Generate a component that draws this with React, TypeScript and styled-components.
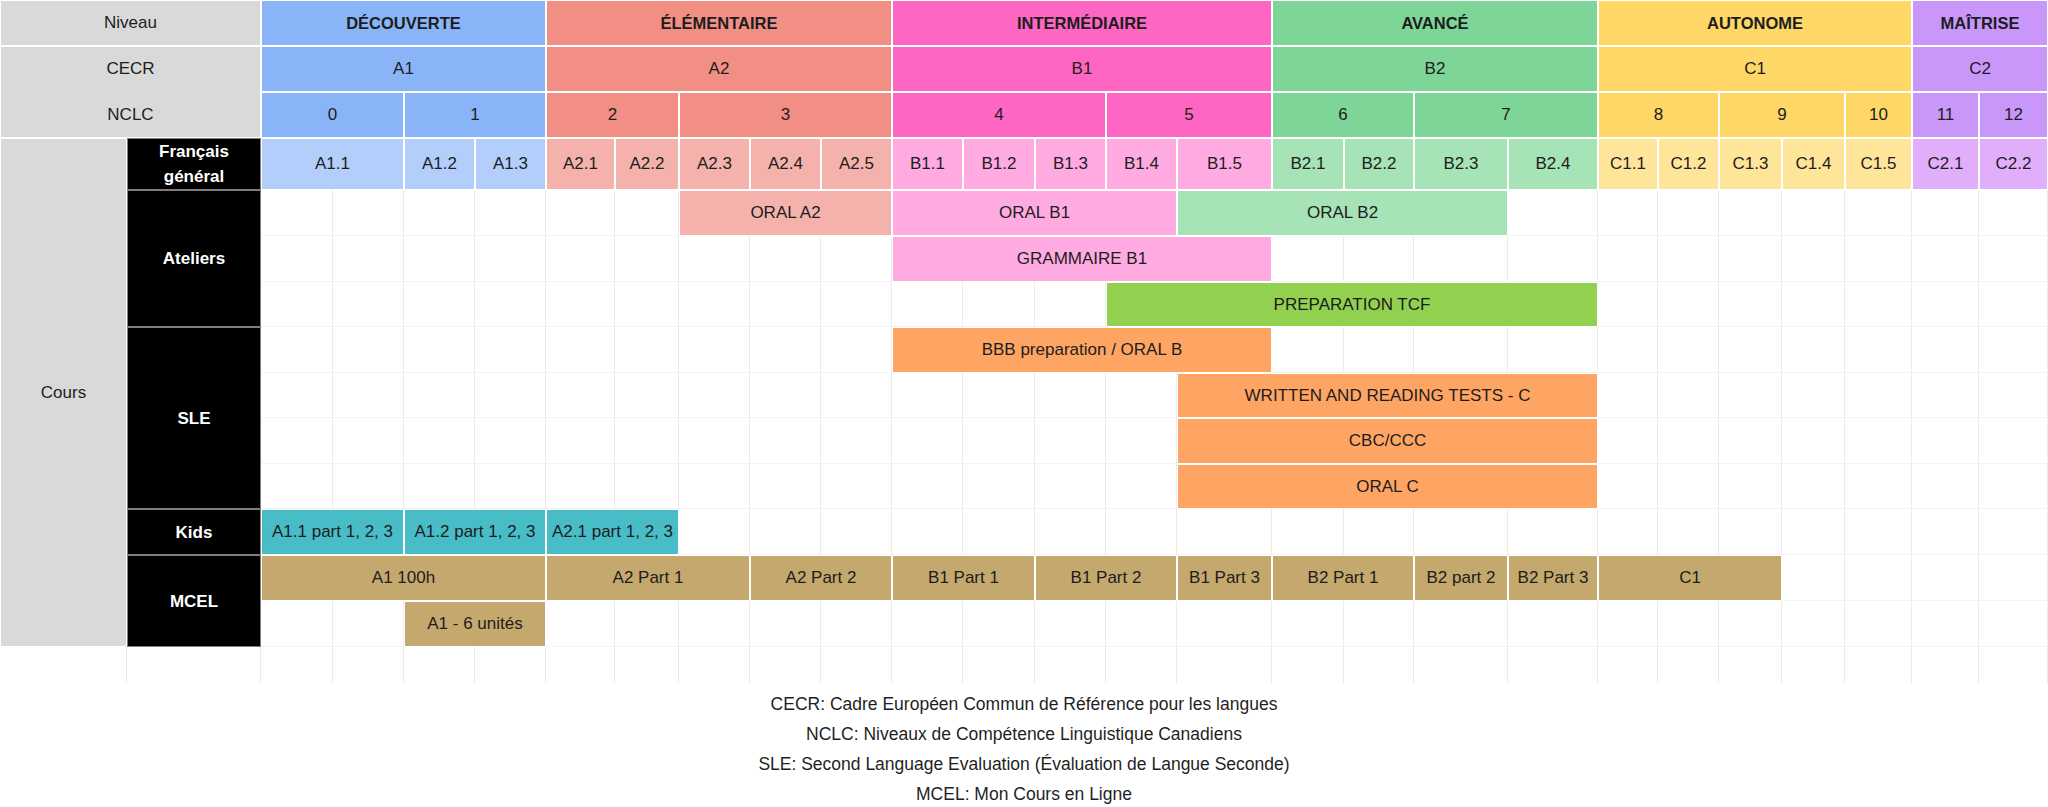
import React from 'react';
import styled, { createGlobalStyle } from 'styled-components';

const GlobalStyle = createGlobalStyle`
  html, body { margin: 0; padding: 0; background: #ffffff; }
  body {
    font-family: "Liberation Sans", Arial, sans-serif;
    color: #1d1d1d;
  }
`;

const COLS = [127, 134, 72, 71, 71, 71, 69, 64, 71, 71, 71, 71, 72, 71, 71, 95, 72, 70, 94, 90, 60, 61, 63, 63, 67, 67, 69];
const ROWS = [46, 46, 46, 52, 46, 46, 45, 46, 45, 46, 45, 46, 46, 46, 36];

const Page = styled.div`
  width: 2048px;
`;

const Chart = styled.div`
  display: grid;
  grid-template-columns: ${COLS.map((c) => `${c}px`).join(' ')};
  grid-template-rows: ${ROWS.map((r) => `${r}px`).join(' ')};
  width: 2048px;
`;

type Place = { $c: string; $r: string };

const Cell = styled.div<Place & { $bg?: string }>`
  grid-column: ${(p) => p.$c};
  grid-row: ${(p) => p.$r};
  display: flex;
  align-items: center;
  justify-content: center;
  text-align: center;
  white-space: nowrap;
  background: ${(p) => p.$bg ?? 'transparent'};
  box-shadow: inset 0 0 0 1px #ffffff;
  font-size: 17px;
  color: #1d1d1d;
`;

const GridBg = styled.div<Place & { $open?: boolean }>`
  grid-column: ${(p) => p.$c};
  grid-row: ${(p) => p.$r};
  border-right: 1px solid #ebebeb;
  border-bottom: ${(p) => (p.$open ? 'none' : '1px solid #f4f4f4')};
`;

const LevelHead = styled(Cell)`
  font-weight: 700;
  font-size: 16.5px;
`;

const RowLabel = styled(Cell)<{ $joinBelow?: boolean; $joinAbove?: boolean }>`
  background: #d9d9d9;
  box-shadow: ${(p) =>
    p.$joinBelow
      ? 'inset 1px 1px 0 #ffffff, inset -1px 0 0 #ffffff'
      : p.$joinAbove
      ? 'inset 1px 0 0 #ffffff, inset -1px -1px 0 #ffffff'
      : 'inset 0 0 0 1px #ffffff'};
`;

const GroupLabel = styled(Cell)`
  background: #000000;
  color: #ffffff;
  font-weight: 700;
  font-size: 17px;
  line-height: 25px;
  white-space: normal;
  box-shadow: inset 0 0 0 1px #7d7d7d;
`;

const Bar = styled(Cell)``;

const Footer = styled.div`
  padding-top: 6px;
  text-align: center;
  font-size: 17.5px;
  line-height: 30px;
  color: #1f1f1f;
`;

const FooterLine = styled.div``;

const PAL = {
  blue: ['#8AB4F8', '#B3CEFB'],
  salmon: ['#F28F85', '#F5B2AC'],
  pink: ['#FF66C4', '#FFAAE1'],
  green: ['#7DD697', '#A6E3B7'],
  yellow: ['#FED766', '#FEE59A'],
  purple: ['#C997FA', '#E1AEFC'],
} as const;

type Tone = keyof typeof PAL;

const LEVELS: { name: string; cecr: string; c: string; tone: Tone }[] = [
  { name: 'DÉCOUVERTE', cecr: 'A1', c: '3 / 7', tone: 'blue' },
  { name: 'ÉLÉMENTAIRE', cecr: 'A2', c: '7 / 12', tone: 'salmon' },
  { name: 'INTERMÉDIAIRE', cecr: 'B1', c: '12 / 17', tone: 'pink' },
  { name: 'AVANCÉ', cecr: 'B2', c: '17 / 21', tone: 'green' },
  { name: 'AUTONOME', cecr: 'C1', c: '21 / 26', tone: 'yellow' },
  { name: 'MAÎTRISE', cecr: 'C2', c: '26 / 28', tone: 'purple' },
];

const NCLC: [string, string, Tone][] = [
  ['0', '3 / 5', 'blue'],
  ['1', '5 / 7', 'blue'],
  ['2', '7 / 9', 'salmon'],
  ['3', '9 / 12', 'salmon'],
  ['4', '12 / 15', 'pink'],
  ['5', '15 / 17', 'pink'],
  ['6', '17 / 19', 'green'],
  ['7', '19 / 21', 'green'],
  ['8', '21 / 23', 'yellow'],
  ['9', '23 / 25', 'yellow'],
  ['10', '25 / 26', 'yellow'],
  ['11', '26 / 27', 'purple'],
  ['12', '27 / 28', 'purple'],
];

const GENERAL: [string, string, Tone][] = [
  ['A1.1', '3 / 5', 'blue'],
  ['A1.2', '5 / 6', 'blue'],
  ['A1.3', '6 / 7', 'blue'],
  ['A2.1', '7 / 8', 'salmon'],
  ['A2.2', '8 / 9', 'salmon'],
  ['A2.3', '9 / 10', 'salmon'],
  ['A2.4', '10 / 11', 'salmon'],
  ['A2.5', '11 / 12', 'salmon'],
  ['B1.1', '12 / 13', 'pink'],
  ['B1.2', '13 / 14', 'pink'],
  ['B1.3', '14 / 15', 'pink'],
  ['B1.4', '15 / 16', 'pink'],
  ['B1.5', '16 / 17', 'pink'],
  ['B2.1', '17 / 18', 'green'],
  ['B2.2', '18 / 19', 'green'],
  ['B2.3', '19 / 20', 'green'],
  ['B2.4', '20 / 21', 'green'],
  ['C1.1', '21 / 22', 'yellow'],
  ['C1.2', '22 / 23', 'yellow'],
  ['C1.3', '23 / 24', 'yellow'],
  ['C1.4', '24 / 25', 'yellow'],
  ['C1.5', '25 / 26', 'yellow'],
  ['C2.1', '26 / 27', 'purple'],
  ['C2.2', '27 / 28', 'purple'],
];

const ORANGE = '#FFA564';
const TEAL = '#48BCC7';
const TAN = '#C4A86D';
const LIME = '#92D050';

const BARS: { label: string; c: string; r: string; bg: string }[] = [
  { label: 'ORAL A2', c: '9 / 12', r: '5', bg: PAL.salmon[1] },
  { label: 'ORAL B1', c: '12 / 16', r: '5', bg: PAL.pink[1] },
  { label: 'ORAL B2', c: '16 / 20', r: '5', bg: PAL.green[1] },
  { label: 'GRAMMAIRE B1', c: '12 / 17', r: '6', bg: PAL.pink[1] },
  { label: 'PREPARATION TCF', c: '15 / 21', r: '7', bg: LIME },
  { label: 'BBB preparation / ORAL B', c: '12 / 17', r: '8', bg: ORANGE },
  { label: 'WRITTEN AND READING TESTS - C', c: '16 / 21', r: '9', bg: ORANGE },
  { label: 'CBC/CCC', c: '16 / 21', r: '10', bg: ORANGE },
  { label: 'ORAL C', c: '16 / 21', r: '11', bg: ORANGE },
  { label: 'A1.1 part 1, 2, 3', c: '3 / 5', r: '12', bg: TEAL },
  { label: 'A1.2 part 1, 2, 3', c: '5 / 7', r: '12', bg: TEAL },
  { label: 'A2.1 part 1, 2, 3', c: '7 / 9', r: '12', bg: TEAL },
  { label: 'A1 100h', c: '3 / 7', r: '13', bg: TAN },
  { label: 'A2 Part 1', c: '7 / 10', r: '13', bg: TAN },
  { label: 'A2 Part 2', c: '10 / 12', r: '13', bg: TAN },
  { label: 'B1 Part 1', c: '12 / 14', r: '13', bg: TAN },
  { label: 'B1 Part 2', c: '14 / 16', r: '13', bg: TAN },
  { label: 'B1 Part 3', c: '16 / 17', r: '13', bg: TAN },
  { label: 'B2 Part 1', c: '17 / 19', r: '13', bg: TAN },
  { label: 'B2 part 2', c: '19 / 20', r: '13', bg: TAN },
  { label: 'B2 Part 3', c: '20 / 21', r: '13', bg: TAN },
  { label: 'C1', c: '21 / 24', r: '13', bg: TAN },
  { label: 'A1 - 6 unités', c: '5 / 7', r: '14', bg: TAN },
];

const GROUPS: { label: React.ReactNode; r: string }[] = [
  { label: <>Français<br />général</>, r: '4 / 5' },
  { label: 'Ateliers', r: '5 / 8' },
  { label: 'SLE', r: '8 / 12' },
  { label: 'Kids', r: '12 / 13' },
  { label: 'MCEL', r: '13 / 15' },
];

export default function App() {
  const bg: React.ReactNode[] = [];
  for (let r = 5; r <= 15; r++) {
    for (let c = 1; c <= 27; c++) {
      bg.push(<GridBg key={`g-${r}-${c}`} $c={`${c} / ${c + 1}`} $r={`${r} / ${r + 1}`} $open={r === 15} />);
    }
  }

  return (
    <Page>
      <GlobalStyle />
      <Chart>
        {bg}

        <RowLabel $c="1 / 3" $r="1">Niveau</RowLabel>
        {LEVELS.map((l) => (
          <LevelHead key={l.name} $c={l.c} $r="1" $bg={PAL[l.tone][0]}>
            {l.name}
          </LevelHead>
        ))}

        <RowLabel $c="1 / 3" $r="2" $joinBelow>CECR</RowLabel>
        {LEVELS.map((l) => (
          <Cell key={l.cecr} $c={l.c} $r="2" $bg={PAL[l.tone][0]}>
            {l.cecr}
          </Cell>
        ))}

        <RowLabel $c="1 / 3" $r="3" $joinAbove>NCLC</RowLabel>
        {NCLC.map(([t, c, tone]) => (
          <Cell key={`n-${t}`} $c={c} $r="3" $bg={PAL[tone][0]}>
            {t}
          </Cell>
        ))}

        <RowLabel $c="1 / 2" $r="4 / 15">Cours</RowLabel>
        {GROUPS.map((g, i) => (
          <GroupLabel key={i} $c="2 / 3" $r={g.r}>
            {g.label}
          </GroupLabel>
        ))}

        {GENERAL.map(([t, c, tone]) => (
          <Cell key={`f-${t}`} $c={c} $r="4" $bg={PAL[tone][1]}>
            {t}
          </Cell>
        ))}

        {BARS.map((b) => (
          <Bar key={`${b.label}-${b.r}-${b.c}`} $c={b.c} $r={b.r} $bg={b.bg}>
            {b.label}
          </Bar>
        ))}
      </Chart>

      <Footer>
        <FooterLine>CECR: Cadre Européen Commun de Référence pour les langues</FooterLine>
        <FooterLine>NCLC: Niveaux de Compétence Linguistique Canadiens</FooterLine>
        <FooterLine>SLE: Second Language Evaluation (Évaluation de Langue Seconde)</FooterLine>
        <FooterLine>MCEL: Mon Cours en Ligne</FooterLine>
      </Footer>
    </Page>
  );
}
